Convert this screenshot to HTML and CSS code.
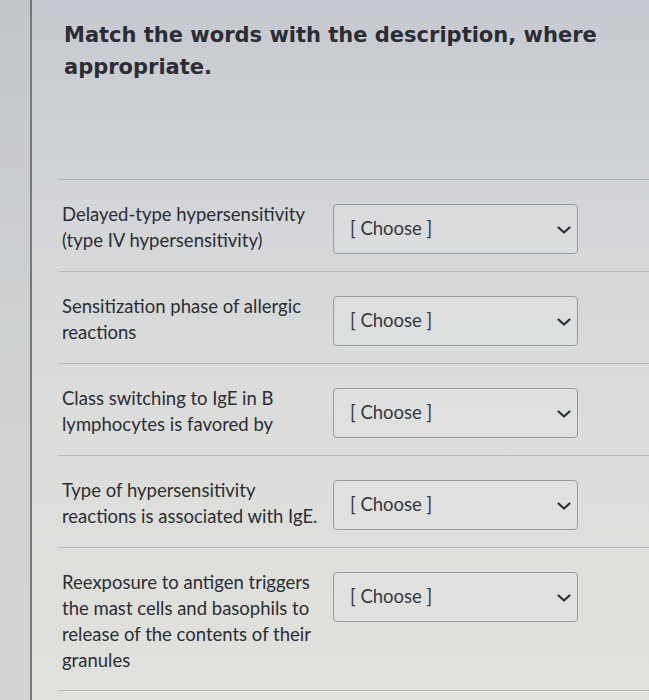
FILE: index.html
```html
<!DOCTYPE html>
<html lang="en">
<head>
<meta charset="utf-8">
<title>Match the words</title>
<link rel="stylesheet" href="styles.css">
</head>
<body>
<div class="page">
  <div class="gutter"></div>
  <main class="panel">
    <h1 class="title">Match the words with the description, where appropriate.</h1>
    <div class="matches">
      <div class="row">
        <div class="label">Delayed-type hypersensitivity (type IV hypersensitivity)</div>
        <div class="select"><span class="value">[ Choose ]</span><svg class="chev" viewBox="0 0 14 8" width="14" height="8"><path d="M1.5 1.5 L7 6.5 L12.5 1.5" fill="none" stroke="#2b2e35" stroke-width="2.2" stroke-linecap="round" stroke-linejoin="round"/></svg></div>
      </div>
      <div class="row">
        <div class="label">Sensitization phase of allergic reactions</div>
        <div class="select"><span class="value">[ Choose ]</span><svg class="chev" viewBox="0 0 14 8" width="14" height="8"><path d="M1.5 1.5 L7 6.5 L12.5 1.5" fill="none" stroke="#2b2e35" stroke-width="2.2" stroke-linecap="round" stroke-linejoin="round"/></svg></div>
      </div>
      <div class="row">
        <div class="label">Class switching to IgE in B lymphocytes is favored by</div>
        <div class="select"><span class="value">[ Choose ]</span><svg class="chev" viewBox="0 0 14 8" width="14" height="8"><path d="M1.5 1.5 L7 6.5 L12.5 1.5" fill="none" stroke="#2b2e35" stroke-width="2.2" stroke-linecap="round" stroke-linejoin="round"/></svg></div>
      </div>
      <div class="row">
        <div class="label">Type of hypersensitivity reactions is associated with IgE.</div>
        <div class="select"><span class="value">[ Choose ]</span><svg class="chev" viewBox="0 0 14 8" width="14" height="8"><path d="M1.5 1.5 L7 6.5 L12.5 1.5" fill="none" stroke="#2b2e35" stroke-width="2.2" stroke-linecap="round" stroke-linejoin="round"/></svg></div>
      </div>
      <div class="row">
        <div class="label">Reexposure to antigen triggers the mast cells and basophils to release of the contents of their granules</div>
        <div class="select"><span class="value">[ Choose ]</span><svg class="chev" viewBox="0 0 14 8" width="14" height="8"><path d="M1.5 1.5 L7 6.5 L12.5 1.5" fill="none" stroke="#2b2e35" stroke-width="2.2" stroke-linecap="round" stroke-linejoin="round"/></svg></div>
      </div>
    </div>
  </main>
</div>
</body>
</html>
```
FILE: styles.css
```css
html, body {
  margin: 0;
  padding: 0;
}
body {
  width: 649px;
  height: 700px;
  overflow: hidden;
  background: linear-gradient(180deg, #c6c9cf 0%, #d3d5d8 30%, #dcdddb 60%, #e0e0dc 100%);
  font-family: Lato, "Liberation Sans", sans-serif;
}
.page {
  display: flex;
  min-height: 700px;
}
.gutter {
  width: 30px;
  flex: none;
  border-right: 2px solid #76787c;
  background: rgba(190, 192, 196, 0.35);
}
.panel {
  flex: 1;
  padding-left: 27px;
}
.title {
  margin: 19px 0 0 0;
  padding-left: 5px;
  font-family: "DejaVu Sans", Verdana, sans-serif;
  font-weight: bold;
  font-size: 21px;
  line-height: 32px;
  color: #2b2c34;
  width: 560px;
}
.matches {
  margin-top: 96px;
  border-top: 1px solid #a9acb1;
}
.row {
  display: flex;
  align-items: flex-start;
  padding: 21px 0 17px 3px;
  border-bottom: 1px solid #b7b9bc;
}
.label {
  width: 262px;
  flex: none;
  font-size: 18.5px;
  line-height: 26px;
  color: #2b2e33;
}
.select {
  margin-left: 9px;
  margin-top: 3px;
  width: 245px;
  height: 50px;
  box-sizing: border-box;
  border: 1px solid #979aa0;
  border-radius: 4px;
  background: rgba(230, 231, 232, 0.35);
  display: flex;
  align-items: center;
  justify-content: space-between;
  padding: 0 6px 0 16px;
}
.value {
  font-size: 18.5px;
  color: #34373d;
  margin-top: -2px;
}
.chev {
  display: block;
  margin-top: 2px;
}
```
